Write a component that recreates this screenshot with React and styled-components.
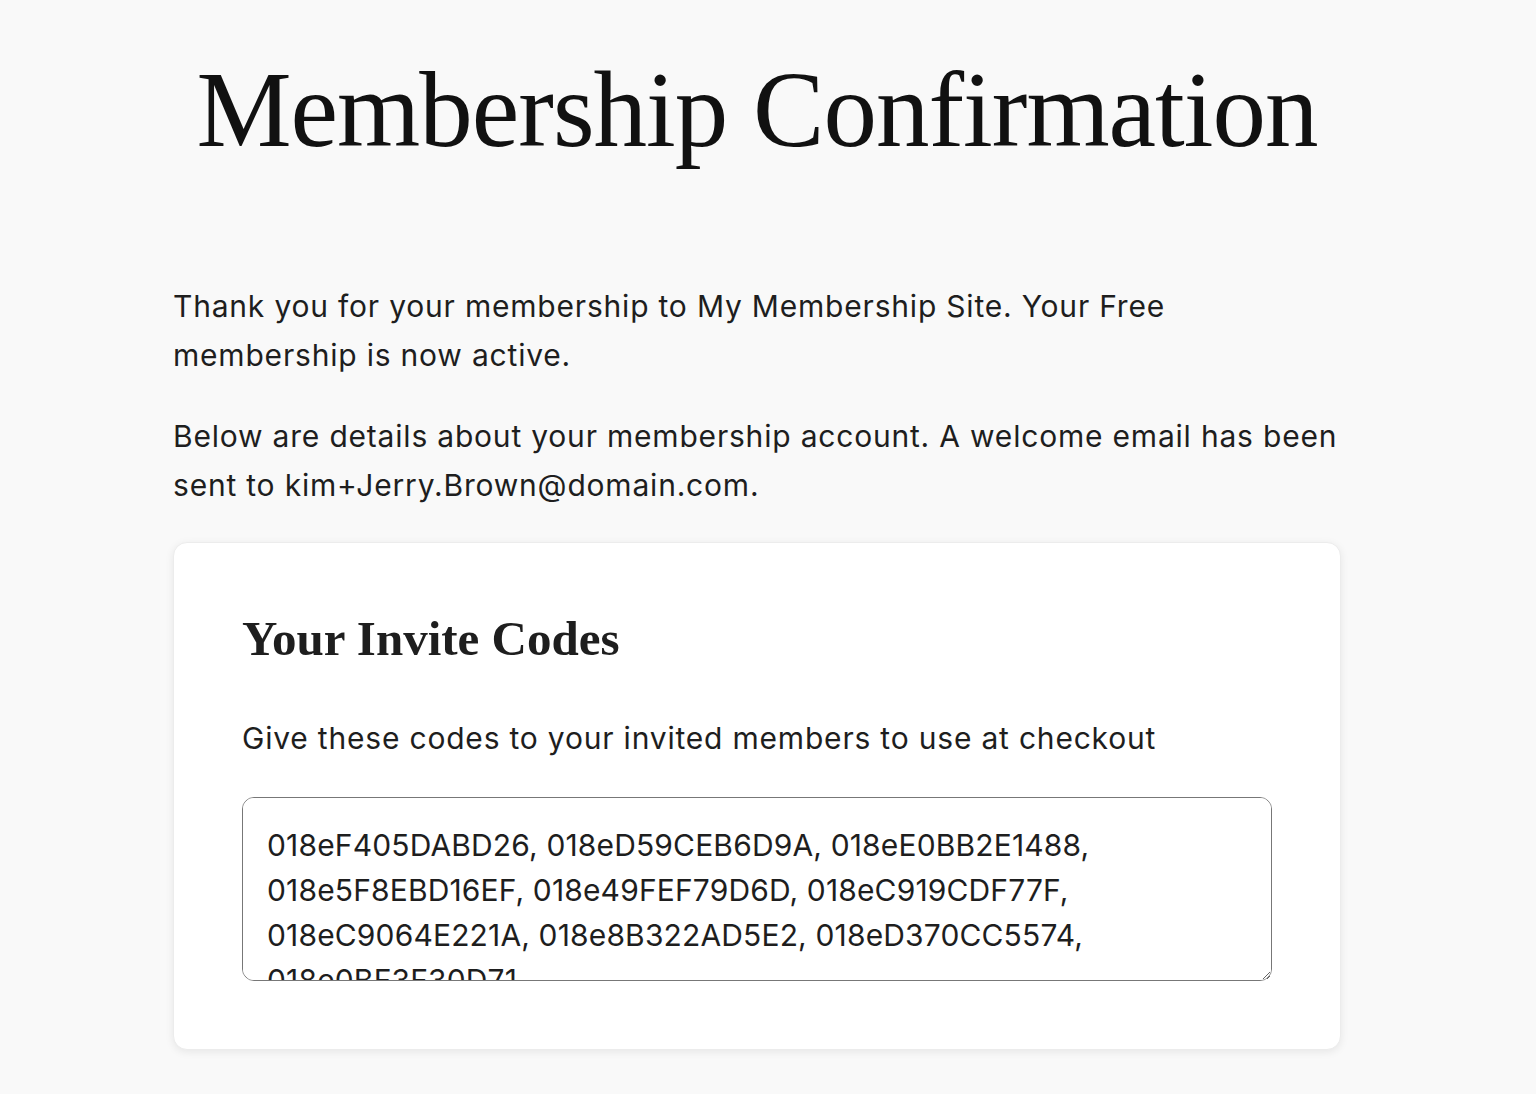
import React from 'react';
import styled, {createGlobalStyle} from 'styled-components';

const Global = createGlobalStyle`
html, body {
    margin: 0;
    padding: 0;
    background: #f9f9f9;
}
body {
    font-family: Inter, "Noto Sans", sans-serif;
    color: #1e1e1e;
}
`

const Page = styled.main`
padding: 46px 195px 60px 173px;
`

const Title = styled.h1`
margin: 0 0 108px;
font-family: "Liberation Serif", "DejaVu Serif", serif;
font-weight: 400;
font-size: 107px;
line-height: 1.2;
text-align: center;
color: #111;
letter-spacing: -1px;
`

const Text = styled.p`
margin: 0 0 ${({tight}) => tight ? '0' : '32px'};
font-size: 30px;
line-height: 49px;
letter-spacing: 0.8px;
color: #1e1e1e;
`

const Card = styled.section`
margin-top: 32px;
background: #fff;
border: 1px solid #ececec;
border-radius: 14px;
box-shadow: 0 2px 8px rgba(0, 0, 0, 0.08);
padding: 67px 68px 68px;
`

const CardTitle = styled.h2`
margin: 0 0 45px;
font-family: "Liberation Serif", "DejaVu Serif", serif;
font-weight: 700;
font-size: 49px;
line-height: 1.2;
color: #1e1e1e;
`

const Codes = styled.textarea`
display: block;
box-sizing: border-box;
width: 100%;
height: 184px;
margin-top: 34px;
padding: 25px 24px;
font-family: Inter, "Noto Sans", sans-serif;
font-size: 30px;
line-height: 45px;
letter-spacing: 0.15px;
color: #1e1e1e;
border: 1.5px solid #777;
border-radius: 12px;
background: #fff;
resize: vertical;
outline: none;
`

const codes = [
    '018eF405DABD26', '018eD59CEB6D9A', '018eE0BB2E1488',
    '018e5F8EBD16EF', '018e49FEF79D6D', '018eC919CDF77F',
    '018eC9064E221A', '018e8B322AD5E2', '018eD370CC5574',
    '018e0BF3F30D71'
]

const App = () => {
    return(
        <>
            <Global />
            <Page>
                <Title>Membership Confirmation</Title>
                <Text>Thank you for your membership to My Membership Site. Your Free membership is now active.</Text>
                <Text tight>Below are details about your membership account. A welcome email has been sent to kim+Jerry.Brown@domain.com.</Text>
                <Card>
                    <CardTitle>Your Invite Codes</CardTitle>
                    <Text tight>Give these codes to your invited members to use at checkout</Text>
                    <Codes readOnly value={codes.join(', ')} />
                </Card>
            </Page>
        </>
    )
}

export default App;
